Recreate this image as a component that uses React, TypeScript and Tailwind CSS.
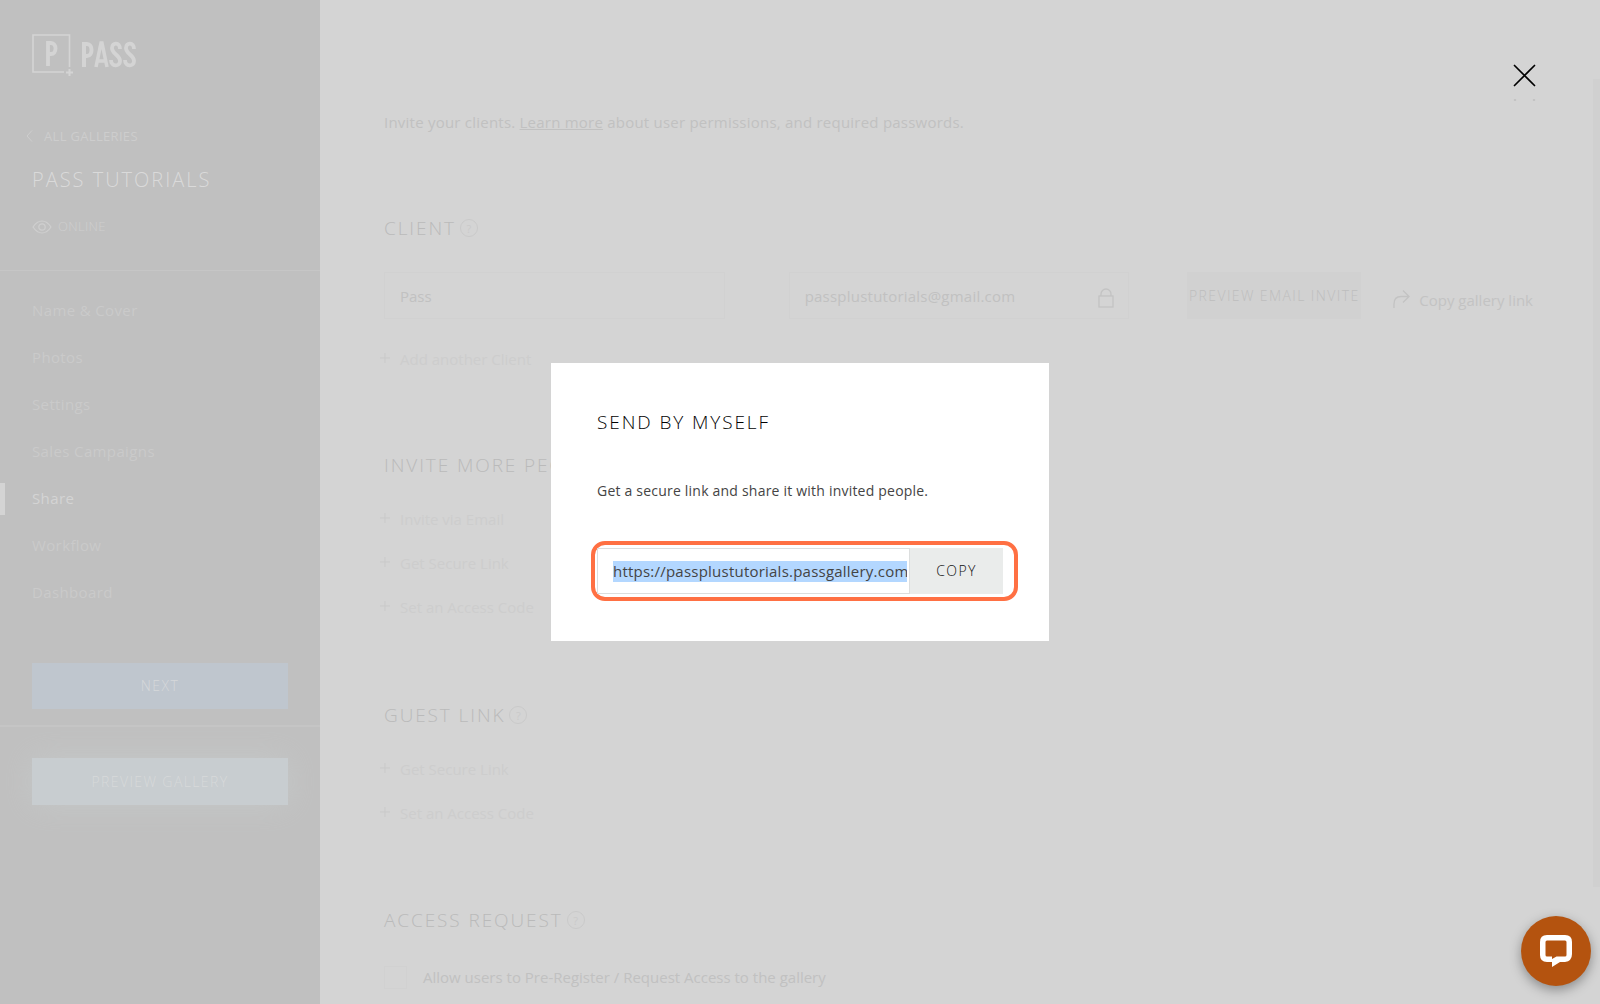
import { type ReactNode } from "react";

const NAV = ["Name & Cover", "Photos", "Settings", "Sales Campaigns", "Share", "Workflow", "Dashboard"];

function Logo() {
  return (
    <div className="flex h-[42px] items-start gap-2 text-[#d4d4d4]">
      <svg width="42" height="42" viewBox="0 0 42 42" fill="none" stroke="currentColor" strokeWidth="1.600" aria-hidden="true">
        <path d="M37.500 33V1H1V38H32" />
        <path d="M34 38.500H41M37.500 35V42" strokeWidth="2" />
        <path d="M16 32V9H19C25 9 25 20 19 20H16" strokeWidth="3.800" />
      </svg>
      <svg width="55" height="34" viewBox="0 0 55 34" fill="none" stroke="currentColor" strokeWidth="4" role="img" aria-label="PASS">
        <path d="M2 33V10H5C11 10 11 22 5 22H2" />
        <path d="M14 33L19 9H20L25 33M16 27H23" strokeWidth="3.500" />
        <path d="M38 15C38 8 30 8 30 14C30 20 38 21 38 27C38 33 29 33 29 26" strokeWidth="3.800" />
        <path d="M52 15C52 8 44 8 44 14C44 20 52 21 52 27C52 33 43 33 43 26" strokeWidth="3.800" />
      </svg>
    </div>
  );
}

function Help() {
  return (
    <button aria-label="Help" className="flex size-[18px] items-center justify-center rounded-full border border-[#cacaca] text-[11px] leading-none text-[#cacaca]">
      ?
    </button>
  );
}

function Heading({ children, help = false }: { children: ReactNode; help?: boolean }) {
  return (
    <div className="flex h-7 items-center gap-1">
      <h2 className="text-[19px] font-light leading-7 tracking-widest text-[#bababa]">{children}</h2>
      {help && <Help />}
    </div>
  );
}

function AddLink({ children }: { children: ReactNode }) {
  return (
    <a href="#" className="-ml-1 flex h-6 items-center gap-[10px] text-[#cdcdcd]">
      <svg width="10" height="10" viewBox="0 0 10 10" stroke="#c9c9c9" className="mb-0.5" aria-hidden="true">
        <path d="M5 0V10M0 5H10" />
      </svg>
      {children}
    </a>
  );
}

function Sidebar() {
  return (
    <aside className="w-80 shrink-0 overflow-hidden bg-[#c0c0c0]">
      <div className="h-[270px] px-8 pt-[34px]">
        <Logo />
        <a href="#" className="-ml-[6px] mt-[49px] flex h-6 items-center gap-[11px] text-[13px] tracking-wide text-[#cdcdcd]">
          <svg width="7" height="12" viewBox="0 0 7 12" fill="none" stroke="currentColor" className="mb-0.5" aria-hidden="true">
            <path d="M6 .5L1 6L6 11.500" />
          </svg>
          ALL GALLERIES
        </a>
        <h1 className="mt-[17px] text-xl font-light leading-7 tracking-widest text-[#dadada]">PASS TUTORIALS</h1>
        <div className="mt-[21px] flex h-6 items-center gap-[6px] text-[13px] font-light tracking-wide text-[#cfcfcf]">
          <svg width="20" height="14" viewBox="0 0 20 14" fill="none" stroke="currentColor" strokeWidth="1.200" aria-hidden="true">
            <path d="M1 7C4 2.500 7 1 10 1S16 2.500 19 7C16 11.500 13 13 10 13S4 11.500 1 7Z" />
            <circle cx="10" cy="7" r="3.200" />
          </svg>
          ONLINE
        </div>
      </div>
      <nav className="border-t border-[#c6c6c6] pt-[16px] tracking-wide">
        {NAV.map((item) => (
          <a
            key={item}
            href="#"
            className={
              item === "Share"
                ? "flex h-[47px] items-center text-[#d4d4d4] before:h-8 before:w-[5px] before:bg-[#d4d4d4]"
                : "flex h-[47px] items-center text-[#cacaca] before:w-[5px]"
            }
          >
            <span className="ml-[27px]">{item}</span>
          </a>
        ))}
      </nav>
      <div className="mt-[47px] px-8 pb-4">
        <button className="h-[46px] w-full bg-[#bfc6ce] text-sm font-light tracking-widest text-[#d6d8da]">NEXT</button>
      </div>
      <div className="border-t-2 border-[#c5c5c5] px-8 pt-[31px]">
        <button className="h-[47px] w-full bg-[#c8cdd0] text-sm font-light tracking-widest text-[#d7d9da] shadow-[0_0_30px_#c5c8c8]">
          PREVIEW GALLERY
        </button>
      </div>
    </aside>
  );
}

function ClientRow() {
  return (
    <div className="flex items-center">
      <input
        aria-label="Client name"
        defaultValue="Pass"
        className="h-[47px] w-[341px] min-w-0 shrink border border-[#d1d1d1] bg-transparent px-[15px] text-[#c1c1c1]"
      />
      <div className="ml-16 flex h-[47px] w-[341px] min-w-0 shrink items-center border border-[#d1d1d1] pl-[15px] pr-[14px]">
        <input
          aria-label="Client email"
          defaultValue="passplustutorials@gmail.com"
          className="h-full min-w-0 flex-1 bg-transparent tracking-[0.015em] text-[#c1c1c1]"
        />
        <svg width="16" height="20" viewBox="0 0 16 20" fill="none" stroke="#c3c3c3" strokeWidth="1.300" className="mt-1" aria-hidden="true">
          <rect x="1" y="8" width="14" height="11" />
          <path d="M3 8V6A5 5 0 0 1 13 6V8" />
        </svg>
      </div>
      <button className="ml-[58px] h-[47px] w-[174px] shrink-0 whitespace-nowrap bg-[#d1d1d1] text-sm font-light tracking-widest text-[#bebebe]">
        PREVIEW EMAIL INVITE
      </button>
      <a href="#" className="ml-8 flex shrink-0 items-center gap-[9px] whitespace-nowrap pt-[10px] text-[#c3c3c3]">
        <svg width="17" height="20" viewBox="0 0 17 20" fill="none" stroke="currentColor" strokeWidth="1.300" className="mb-1" aria-hidden="true">
          <path d="M1 19V15C1 10 4 7.500 8 7.500H16M10 1.500L16 7.500L10 13.500" />
        </svg>
        Copy gallery link
      </a>
    </div>
  );
}

function Content() {
  return (
    <main className="min-w-0 flex-1 bg-[#d4d4d4] pl-16 pr-[67px] pt-[110px]">
      <p className="leading-6 tracking-[0.015em] text-[#c1c1c1]">
        Invite your clients. <a href="#" className="underline">Learn more</a> about user permissions, and required passwords.
      </p>
      <section className="mt-[80px]">
        <Heading help>CLIENT</Heading>
        <div className="mt-[30px]"><ClientRow /></div>
        <div className="mt-[28px]"><AddLink>Add another Client</AddLink></div>
      </section>
      <section className="mt-[80px]">
        <Heading>INVITE MORE PEOPLE</Heading>
        <div className="mt-[28px] flex flex-col gap-5">
          <AddLink>Invite via Email</AddLink>
          <AddLink>Get Secure Link</AddLink>
          <AddLink>Set an Access Code</AddLink>
        </div>
      </section>
      <section className="mt-[82px]">
        <Heading help>GUEST LINK</Heading>
        <div className="mt-[28px] flex flex-col gap-5">
          <AddLink>Get Secure Link</AddLink>
          <AddLink>Set an Access Code</AddLink>
        </div>
      </section>
      <section className="mt-[81px]">
        <Heading help>ACCESS REQUEST</Heading>
        <label className="mt-[31px] flex items-center gap-4 leading-6 text-[#c1c1c1]">
          <input type="checkbox" className="size-[23px] appearance-none border border-[#d1d1d1]" />
          Allow users to Pre-Register / Request Access to the gallery
        </label>
      </section>
    </main>
  );
}

function ShareDialog() {
  return (
    <div className="fixed inset-0 flex items-center justify-center">
      <div role="dialog" aria-labelledby="share-title" className="w-[498px] bg-white px-[46px] pb-10 pt-[45px] text-[#444]">
        <h2 id="share-title" className="text-[19px] font-light leading-7 tracking-widest text-black">SEND BY MYSELF</h2>
        <label htmlFor="share-link" className="mt-[43px] block text-sm leading-6 tracking-[0.015em]">
          Get a secure link and share it with invited people.
        </label>
        <div className="-mx-[6px] mt-[38px] flex w-[427px] rounded-[14px] border-4 border-[#ff7043] py-[3px] pl-[2px]">
          <div className="flex h-[46px] w-[313px] items-center border border-[#dcdede] pl-[15px] pr-[2px]">
            <input
              id="share-link"
              readOnly
              defaultValue="https://passplustutorials.passgallery.com/"
              className="h-[21px] w-full bg-[#b3d7ff] tracking-[0.015em] outline-none"
            />
          </div>
          <button className="h-[46px] w-[93px] bg-[#eaeceb] text-sm font-light tracking-widest text-[#111]">COPY</button>
        </div>
      </div>
    </div>
  );
}

export default function App() {
  return (
    <div className="flex h-screen overflow-hidden font-['Open_Sans',sans-serif] text-[15px]">
      <Sidebar />
      <Content />
      <div className="fixed bottom-[117px] right-0 top-[79px] w-[7px] bg-[#d0d0d0]" />
      <ShareDialog />
      <button aria-label="Close" className="fixed right-[64px] top-[64px]">
        <svg width="23" height="38" viewBox="0 0 23 38" fill="none" stroke="#000" strokeWidth="1.700" strokeLinecap="round">
          <path d="M1.500 1.500L21.500 21.500M21.500 1.500L1.500 21.500" />
          <path d="M1.500 36H2.500M20.500 36H21.500" stroke="#bcbcbc" strokeWidth="1.500" />
        </svg>
      </button>
      <button
        aria-label="Open chat"
        className="fixed bottom-[18px] right-[9px] flex size-[70px] items-center justify-center rounded-full bg-[#b4530f] shadow-[0_4px_12px_rgba(0,0,0,0.35)]"
      >
        <svg width="34" height="34" viewBox="0 0 34 34" aria-hidden="true">
          <path
            d="M8 1H26Q33 1 33 8V20Q33 27 26 28H21L13 33V28H8Q1 28 1 21V8Q1 1 8 1ZM8 6.500Q6.500 6.500 6.500 8V21Q6.500 22.500 8 22.500H13V25L17.500 22.500H26Q27.500 22.500 27.500 21V8Q27.500 6.500 26 6.500Z"
            fill="#fff"
            fillRule="evenodd"
          />
        </svg>
      </button>
    </div>
  );
}
